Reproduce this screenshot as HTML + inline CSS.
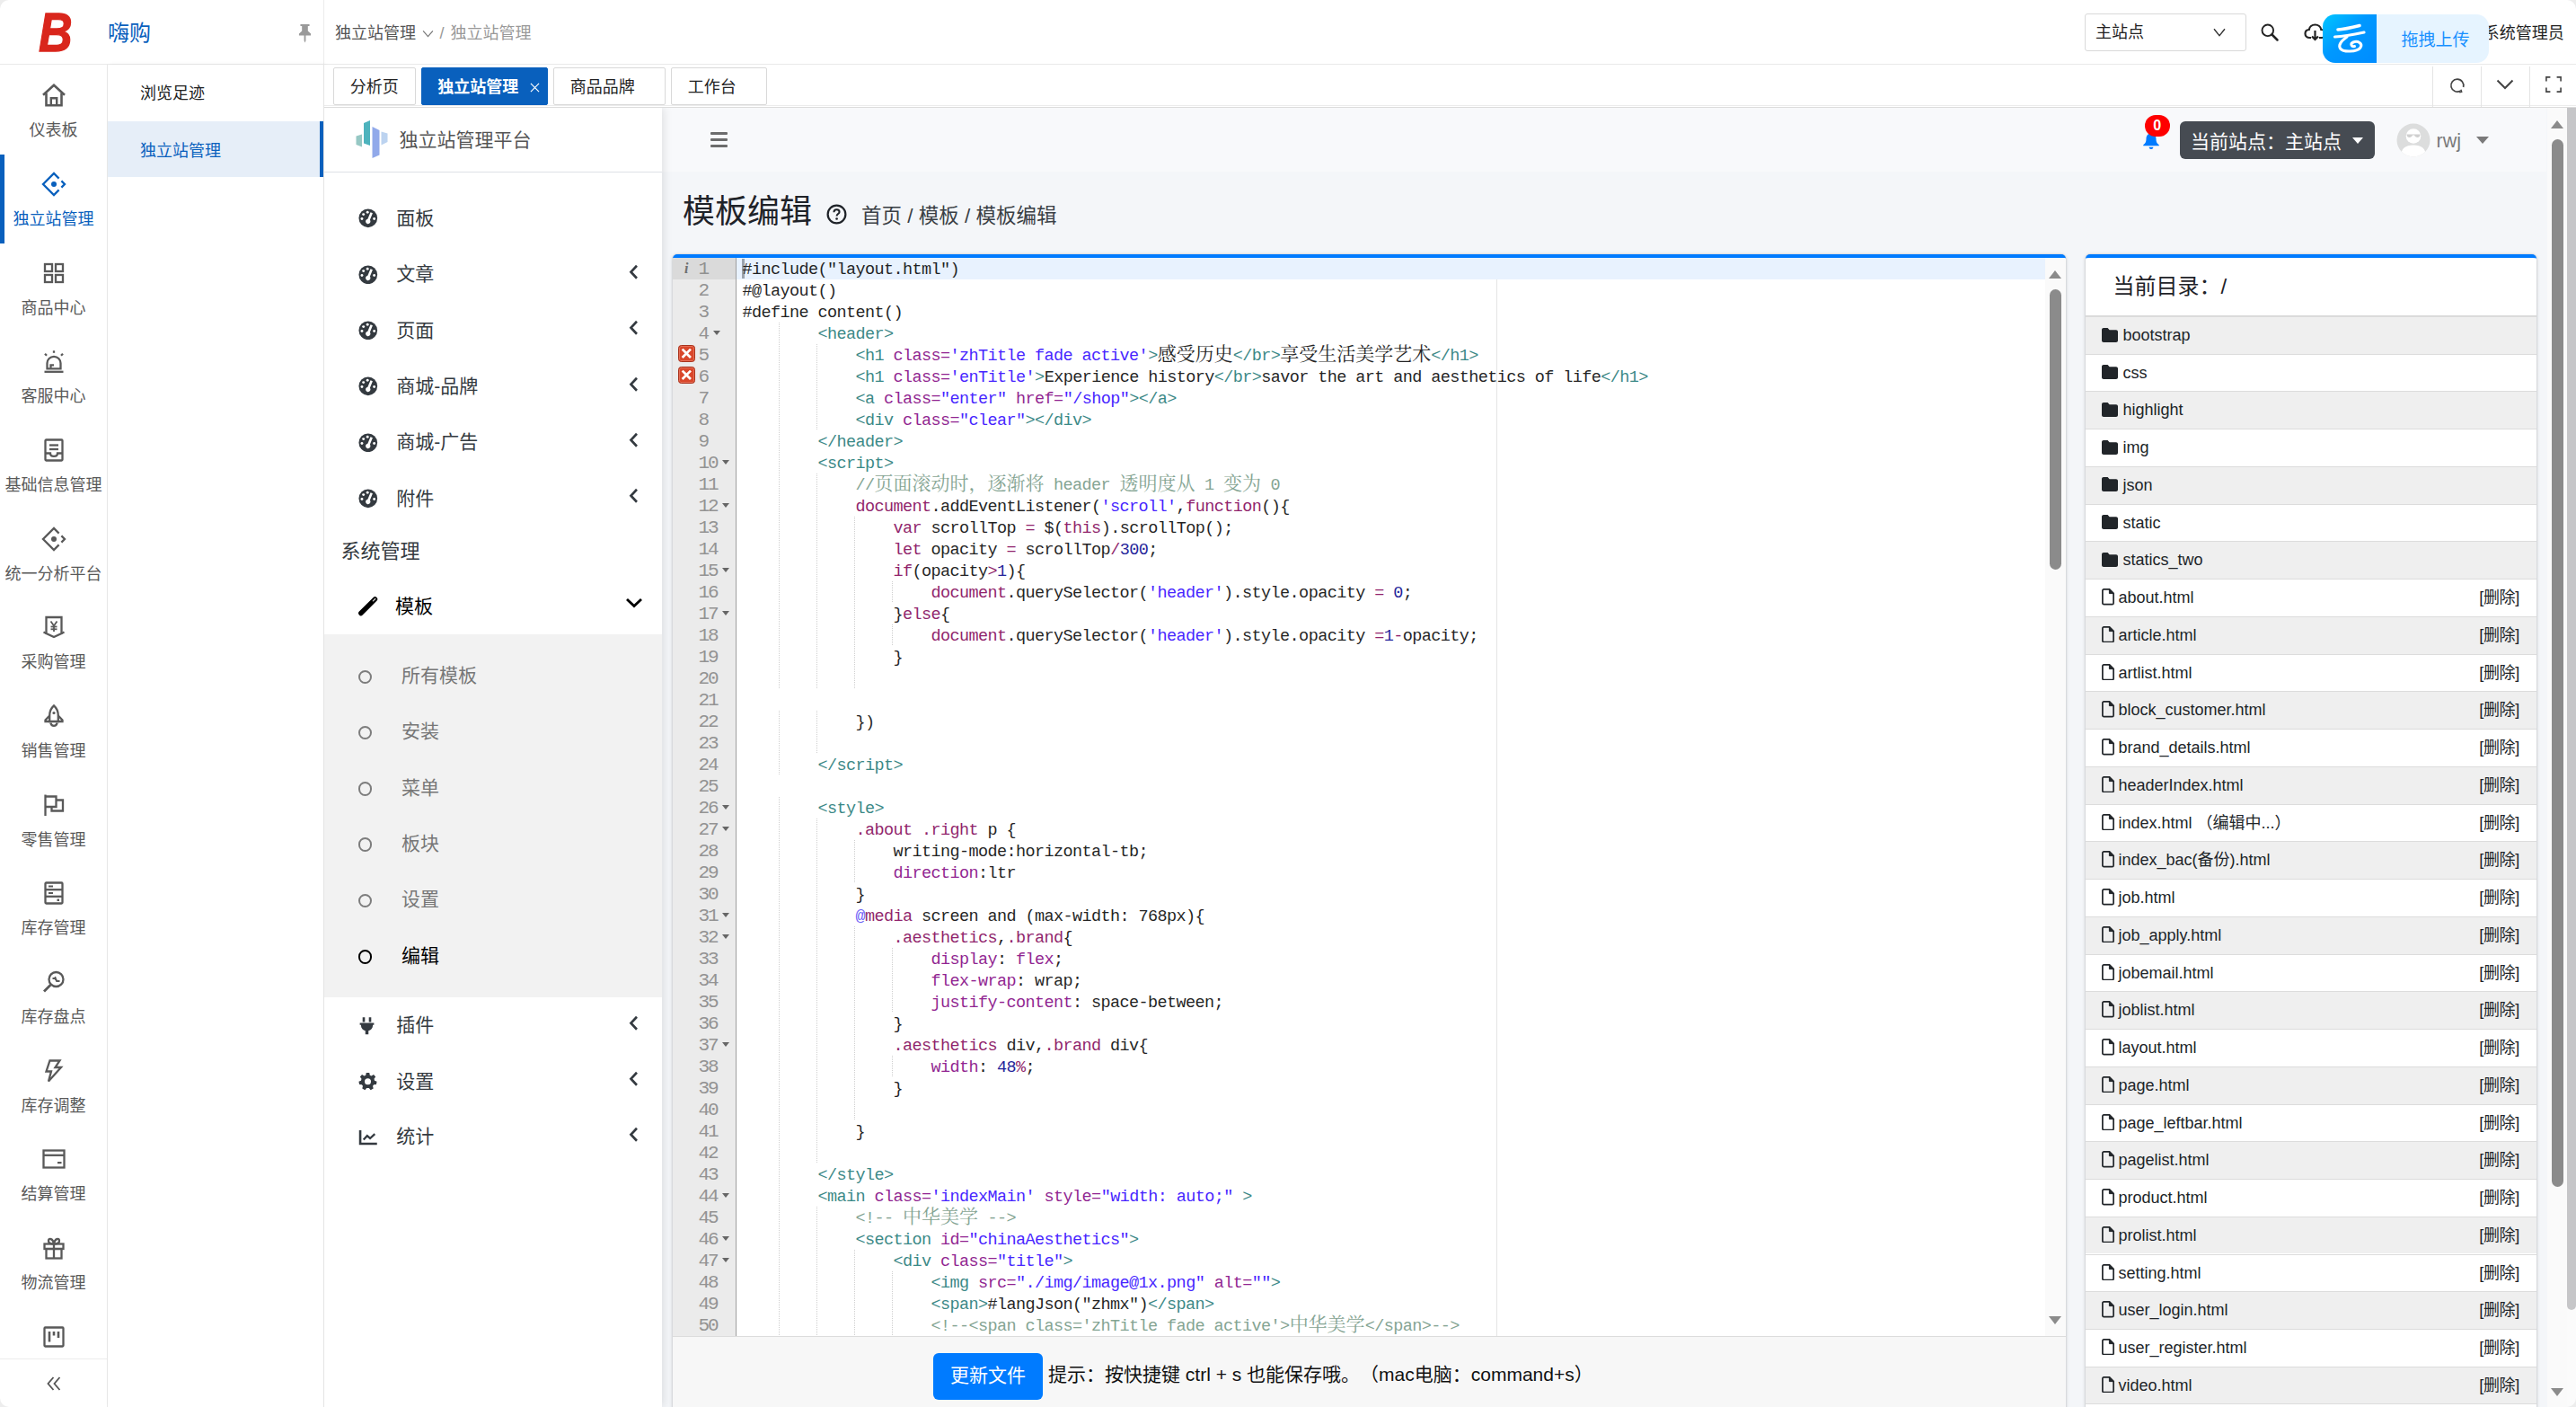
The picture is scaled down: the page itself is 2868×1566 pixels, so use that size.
<!DOCTYPE html>
<html lang="zh-CN">
<head>
<meta charset="utf-8">
<title>模板编辑 - 独立站管理</title>
<style>
*{box-sizing:border-box;margin:0;padding:0}
html,body{width:2868px;height:1566px;overflow:hidden;background:#fff}
body{position:relative;text-spacing-trim:space-all;font-family:"Liberation Sans","Noto Sans CJK SC",sans-serif;font-size:18px;color:#333;line-height:1}
.abs{position:absolute}
svg{display:block}
/* ---------- outer header ---------- */
#hdr{position:absolute;left:0;top:0;width:2868px;height:72px;background:#fff;border-bottom:1px solid #e9e9e9}
#logoBox{position:absolute;left:0;top:0;width:361px;height:71px;border-right:1px solid #ececec}
#logoB{position:absolute;left:42.500px;top:1px;font:italic bold 62px/70px "Liberation Sans",sans-serif;color:#d9261c;-webkit-text-stroke:1.300px #d9261c;transform:scaleX(.84);transform-origin:left top}
#brand{position:absolute;left:120px;top:21px;font-size:24px;line-height:32px;color:#0960bd}
#crumb{position:absolute;left:373px;top:21.2px;height:32px;line-height:32px;font-size:18px;color:#555;white-space:nowrap}
#crumb .g{color:#999}
#siteSel{position:absolute;left:2321px;top:15px;width:180px;height:42px;border:1px solid #d9d9d9;border-radius:3px;background:#fff}
#siteSel span{position:absolute;left:11px;top:0;line-height:40px;font-size:18px;color:#222}
#admin{position:absolute;left:2764.7px;top:21.2px;line-height:32px;font-size:18px;color:#222;white-space:nowrap}
#pill{position:absolute;left:2586px;top:16px;width:185px;height:54px;border-radius:14px;background:#e6f4ff;overflow:hidden}
#pill .ic{position:absolute;left:0;top:0;width:60px;height:54px;background:linear-gradient(135deg,#00c6ff 0%,#0098ff 45%,#008cff 100%)}
#pill .tx{position:absolute;left:87.5px;top:1.2px;line-height:56px;font-size:19px;color:#1890ff;white-space:nowrap}
/* ---------- rail ---------- */
#rail{position:absolute;left:0;top:72px;width:120px;height:1494px;background:#fff;border-right:1px solid #e9e9e9;overflow:hidden}
.ri{position:absolute;left:0;width:119px;height:98.65px;text-align:center;color:#595959}
.ri svg{position:absolute;left:46px;top:19px;width:28px;height:28px}
.ri span{position:absolute;left:-20px;width:159px;top:60px;line-height:24px;font-size:18px;white-space:nowrap}
.ri.on{color:#0960bd}
.ri.on:before{content:"";position:absolute;left:0;top:0;width:5px;height:98.65px;background:#0960bd}
#railFoot{position:absolute;left:0;top:1440px;width:119px;height:54px;background:#fff;border-top:1px solid #ececec}
/* ---------- secondary menu ---------- */
#sub{position:absolute;left:120px;top:72px;width:241px;height:1494px;background:#fff;border-right:1px solid #e4e4e4;box-shadow:2px 0 5px rgba(0,0,0,.05)}
#sub .it{position:absolute;left:0;width:240px;height:61.5px;line-height:61.5px;padding-left:36px;font-size:18px;color:#222}
#sub .it.on{background:#e6eef8;color:#0960bd;border-right:4px solid #0960bd;line-height:66.5px}
/* ---------- tabs ---------- */
#tabs{position:absolute;left:361px;top:72px;width:2507px;height:48px;background:#fff}
#tabs .ln1{position:absolute;left:0;top:44.5px;width:2507px;height:1px;background:#ececec}
#tabs .ln2{position:absolute;left:0;top:47px;width:2507px;height:1px;background:#dcdcdc}
.tab{position:absolute;top:3px;height:42px;border:1px solid #d9d9d9;border-radius:2px;background:#fff;font-size:18px;line-height:42.5px;color:#222;padding-left:17.7px;white-space:nowrap}
.tab.on{background:#0960bd;border-color:#0960bd;color:#fff;font-weight:bold}
.tbtn{position:absolute;top:2px;width:54px;height:45px;border-left:1px solid #e4e4e4}

/* ---------- inner frame ---------- */
#frame{position:absolute;left:361px;top:120px;width:2507px;height:1446px;background:#f4f6f9;overflow:hidden;font-size:21px;color:#212529}
#side{position:absolute;left:0;top:0;width:376px;height:1446px;background:#fff;box-shadow:2px 0 10px rgba(0,0,0,.10)}
#side .logo{position:absolute;left:0;top:0;width:376px;height:71.5px;border-bottom:1.5px solid #dee2e6}
#side .logo span{position:absolute;left:83.500px;top:16px;line-height:40px;font-size:21px;color:#555;white-space:nowrap}
.mi{position:absolute;left:0;width:376px;height:56px;color:#343a40;font-size:21px;line-height:56px}
.mi .ic{position:absolute;left:36.200px;top:15.5px;width:25px;height:25px}
.mi .tx{position:absolute;left:80.200px;top:0;white-space:nowrap}
.mi .ch{position:absolute;left:339px;top:15px;width:12px;height:20px}
.mh{position:absolute;left:18.500px;top:474px;line-height:40px;font-size:22px;color:#343a40}
#subm{position:absolute;left:0;top:586px;width:376px;height:404px;background:#f2f2f2}
.si{position:absolute;left:0;width:376px;height:56px;color:#777;font-size:21px;line-height:56px}
.si i{position:absolute;left:37.700px;top:21.500px;width:15.500px;height:15.500px;border:2px solid #7d7d7d;border-radius:50%}
.si span{position:absolute;left:86px;top:0}
.si.on{color:#000}
.si.on i{border-color:#000}
#nav{position:absolute;left:376px;top:0;width:2098px;height:71px;background:#f8f9fb}
#nav .bar{position:absolute;left:54px;width:19px;height:2.6px;background:#6c6c6c;border-radius:1px}
#site{position:absolute;left:1690px;top:15px;width:217px;height:42px;background:#464b52;border-radius:6px;color:#fff;font-size:21px;line-height:45px;padding-left:12px;white-space:nowrap}
#rwj{position:absolute;left:1975.500px;top:16.500px;line-height:40px;font-size:21.500px;color:#7a7a7a}
#ttl{position:absolute;left:399px;top:92px;line-height:48px;font-size:36px;color:#1f2329;white-space:nowrap}
#bc{position:absolute;left:598px;top:103px;line-height:36px;font-size:22.5px;color:#3a3f45;white-space:nowrap}
/* cards */
.card{position:absolute;background:#fff;border-top:4px solid #007bff;border-radius:5px;box-shadow:0 0 2px rgba(0,0,0,.16),0 1px 4px rgba(0,0,0,.18);overflow:hidden}
/* scrollbars */
.sbt{position:absolute;background:#fafafa}
.thumb{position:absolute;background:#8b8b8b;border-radius:7px}
.tri-u{position:absolute;width:0;height:0;border-left:7.5px solid transparent;border-right:7.5px solid transparent;border-bottom:9.5px solid #8b8b8b}
.tri-d{position:absolute;width:0;height:0;border-left:7.5px solid transparent;border-right:7.5px solid transparent;border-top:9.5px solid #8b8b8b}

/* ---------- editor ---------- */
#ed{left:388px;top:163px;width:1551px;height:1300px}
#gut{position:absolute;left:0;top:0;width:71px;height:1200px;background:#ebebeb;border-right:1px solid #9f9f9f}
#gut .al{position:absolute;left:0;top:0;width:70px;height:24px;background:#dadada}
.ln{position:absolute;left:28.5px;height:24px;line-height:24px;font-family:"Liberation Mono",monospace;font-size:21px;letter-spacing:-2.1px;color:#8a8a8a;white-space:pre}
.ln b{position:relative;top:1.2px;font-weight:normal;opacity:.9}
.fa{position:absolute;width:0;height:0;border-left:4.5px solid transparent;border-right:4.5px solid transparent;border-top:5.5px solid #666}
.err{position:absolute;left:6px;width:19px;height:19px;border-radius:3.5px;background:#d9472b;border:1.2px solid #a8321c;box-shadow:inset 0 0 0 1px rgba(255,180,160,.35)}
#code{position:absolute;left:71px;top:0;width:1457px;height:1200px;background:#fff;overflow:hidden}
#code .al{position:absolute;left:0;top:0;width:1457px;height:24px;background:#e8f2fe}
#code .pm{position:absolute;left:845.5px;top:24px;width:1.5px;height:1176px;background:#e4e4e4}
.cl{position:absolute;left:6.5px;height:24px;line-height:24px;font-family:"Liberation Mono","Noto Serif CJK SC",monospace;font-size:18.5px;letter-spacing:-0.6px;color:#000;white-space:pre}
.cl>b{position:relative;top:1.7px;font-weight:normal;opacity:.86}
.cl .z{font-size:21px;letter-spacing:0;line-height:20px;position:relative;top:0.5px}
.cl .t{color:#197674}.cl .a{color:#7f007f}.cl .s{color:#2a00ff}.cl .k{color:#7f0055}.cl .n{color:#00008b}.cl .c{color:#719682}.cl .y{color:#7f007f}.cl .b{color:#5848f6}
.ig{position:absolute;width:1px;height:24px;background:repeating-linear-gradient(to bottom,#cfcfcf 0,#cfcfcf 1px,transparent 1px,transparent 2px)}
#edfoot{position:absolute;left:0;top:1200px;width:1551px;height:120px;background:#f7f7f7;border-top:1px solid #dcdcdc}
#upd{position:absolute;left:290px;top:18px;width:122px;height:52px;border-radius:6px;background:#007bff;color:#fff;font-size:21px;line-height:50.500px;text-align:center}
#hint{position:absolute;left:418px;top:18px;line-height:48.500px;font-size:21px;color:#111;white-space:nowrap}

/* ---------- file list ---------- */
#fl{left:1960.5px;top:163px;width:502.5px;height:1300px}
#fl .hd{position:absolute;left:0;top:0;width:502.5px;height:65px;border-bottom:1px solid #d8d8d8}
#fl .hd span{position:absolute;left:31px;top:13px;line-height:38px;font-size:24px;color:#1f2329;white-space:nowrap}
.fr{position:absolute;left:0;width:502.5px;height:41.74px;border-top:1.5px solid #dcdcdc;font-size:18px;line-height:40px;color:#212529;white-space:nowrap}
.fr.g{background:#efefef}
.fr .fo{position:absolute;left:18px;top:11.5px;width:18px;height:16px}
.fr .fi{position:absolute;left:18px;top:10px;width:14px;height:18.5px}
.fr .nm{position:absolute;top:0}
.fr .del{position:absolute;right:19px;top:0;letter-spacing:-0.3px}
</style>
</head>
<body>
<div id="hdr">
<div id="logoBox"><div id="logoB">B</div><div id="brand">嗨购</div>
<svg viewBox="0 0 20 24" style="position:absolute;left:330px;top:26px;width:19px;height:22px"><path d="M4.5 1 H15.5 V3.2 H13.6 V9.2 L17.2 12.6 V14.6 H11 V21 L10 23.5 L9 21 V14.6 H2.8 V12.6 L6.4 9.2 V3.2 H4.5 Z" fill="#9a9a9a"/></svg>
</div>
<div id="crumb">独立站管理<svg viewBox="0 0 14 10" style="display:inline-block;width:13px;height:9px;margin:0 7px 0 6.5px;vertical-align:1px"><path d="M1 1.5 L7 8.5 L13 1.5" fill="none" stroke="#777" stroke-width="1.3"/></svg><span class="g">/<span style="display:inline-block;width:7px"></span>独立站管理</span></div>
<div id="siteSel"><span>主站点</span><svg viewBox="0 0 14 10" style="position:absolute;left:141.700px;top:14.500px;width:14px;height:10px"><path d="M1 1.2 L7 8.6 L13 1.2" fill="none" stroke="#333" stroke-width="1.4"/></svg></div>
<svg viewBox="0 0 22 22" style="position:absolute;left:2515.500px;top:25px;width:22px;height:22px"><circle cx="8.8" cy="8.8" r="6.3" fill="none" stroke="#222" stroke-width="1.9"/><path d="M13.5 13.5 L19.500 19.500" stroke="#222" stroke-width="2.500" stroke-linecap="round"/></svg>
<svg viewBox="0 0 26 20" style="position:absolute;left:2565px;top:26px;width:26px;height:20px"><path d="M8 16 H6.5 C3.5 16 1.5 14 1.5 11.5 C1.5 9 3.3 7.2 5.8 7 C6.3 3.8 9 1.5 12.5 1.5 C16 1.5 18.8 3.8 19.3 7 C22 7.2 24.5 9 24.5 11.8 C24.5 14.2 22.5 16 20 16 H17" fill="none" stroke="#222" stroke-width="2.2"/><path d="M12.5 8 V17.5 M9 14.5 L12.5 18 L16 14.5" fill="none" stroke="#222" stroke-width="2.2"/></svg>
<div id="admin">系统管理员</div>
<div id="pill"><div class="ic"><svg viewBox="0 0 60 54" style="width:60px;height:54px"><g fill="none" stroke="#fff" stroke-linecap="round"><path d="M17 17 C25 16.5 33 14.5 41 12.5" stroke-width="3.6"/><path d="M13.5 25 C23 24.5 34 22.5 46 20" stroke-width="3.2"/><path d="M27 25 C20 30 17 34 19.5 38 C23 42.5 38 42 42 37 C45 32.5 39 29 34 31 C30.5 32.5 31.5 36.5 35.5 35.5" stroke-width="3"/></g></svg></div><div class="tx">拖拽上传</div></div>
</div>
<div id="rail">
<div class="ri" style="top:1.40px"><svg viewBox="0 0 28 28" ><g fill="none" stroke="currentColor" stroke-width="2.3" stroke-linejoin="miter" stroke-linecap="butt" stroke-linejoin="round"><path d="M2 13.800 L14 2.800 L26 13.800" stroke-width="2.600"/><path d="M5.500 11.500 V25.300 H22.500 V11.500" stroke-width="2.600"/><path d="M10.800 25 V17.300 H17.200 V25" stroke-width="2.400"/></g></svg><span>仪表板</span></div>
<div class="ri on" style="top:100.05px"><svg viewBox="0 0 28 28" ><g fill="none" stroke="currentColor" stroke-width="2.3" stroke-linejoin="miter" stroke-linecap="butt" stroke-width="2.600"><path d="M19.600 7.600 L14 2 L2 14 L14 26 L19.600 20.400"/><path d="M22.400 10.400 L26 14 L22.400 17.600"/></g><circle cx="14" cy="14" r="3" fill="currentColor"/></svg><span>独立站管理</span></div>
<div class="ri" style="top:198.70px"><svg viewBox="0 0 28 28" ><g fill="none" stroke="currentColor" stroke-width="2.3" stroke-linejoin="miter" stroke-linecap="butt"><rect x="4" y="4" width="8" height="8"/><rect x="16" y="4" width="8" height="8"/><rect x="4" y="16" width="8" height="8"/><rect x="16" y="16" width="8" height="8"/></g></svg><span>商品中心</span></div>
<div class="ri" style="top:297.35px"><svg viewBox="0 0 28 28" ><g fill="none" stroke="currentColor" stroke-width="2.3" stroke-linejoin="miter" stroke-linecap="butt" transform="translate(0,0.8)"><path d="M6.5 21.5 V15.5 a7.5 7.5 0 0 1 15 0 V21.5 Z"/><path d="M3.5 25 H24.5"/><path d="M14 1.5 V4"/><path d="M4 5 L6 7"/><path d="M24 5 L22 7"/><path d="M10.5 21 V17.5 H14"/></g></svg><span>客服中心</span></div>
<div class="ri" style="top:396.00px"><svg viewBox="0 0 28 28" ><g fill="none" stroke="currentColor" stroke-width="2.3" stroke-linejoin="miter" stroke-linecap="butt"><rect x="4.5" y="2.5" width="19" height="23" rx="1"/><path d="M9 8.5 H19"/><path d="M9 13 H19"/><path d="M4.5 17.5 H10 C10 22 18 22 18 17.5 H23.5"/></g></svg><span>基础信息管理</span></div>
<div class="ri" style="top:494.65px"><svg viewBox="0 0 28 28" ><g fill="none" stroke="currentColor" stroke-width="2.3" stroke-linejoin="miter" stroke-linecap="butt" stroke-width="2.600"><path d="M19.600 7.600 L14 2 L2 14 L14 26 L19.600 20.400"/><path d="M22.400 10.400 L26 14 L22.400 17.600"/></g><circle cx="14" cy="14" r="3" fill="currentColor"/></svg><span>统一分析平台</span></div>
<div class="ri" style="top:593.30px"><svg viewBox="0 0 28 28" ><g fill="none" stroke="currentColor" stroke-width="2.3" stroke-linejoin="miter" stroke-linecap="butt"><path d="M5.5 3 H22.5 V21 L14 25 L5.5 21 Z"/><path d="M2.5 19.5 L5.5 21"/><path d="M25.5 19.5 L22.5 21"/></g><g fill="none" stroke="currentColor" stroke-width="1.8"><path d="M10.5 7.5 L14 12.5 L17.5 7.5"/><path d="M14 12.5 V19"/><path d="M10.5 13.5 H17.5"/><path d="M10.5 16.3 H17.5"/></g></svg><span>采购管理</span></div>
<div class="ri" style="top:691.95px"><svg viewBox="0 0 28 28" ><g fill="none" stroke="currentColor" stroke-width="2.3" stroke-linejoin="miter" stroke-linecap="butt" stroke-linejoin="round"><path d="M14 2.300 C17.600 5.500 18.800 9.500 18.800 13.500 V20 H9.200 V13.500 C9.200 9.500 10.400 5.500 14 2.300 Z"/><path d="M9.200 13.500 L4.500 18.500 V20 H9.200"/><path d="M18.800 13.500 L23.500 18.500 V20 H18.800"/><path d="M10.300 21.500 C11.300 26 16.700 26 17.700 21.500"/></g><circle cx="14" cy="10.500" r="1.600" fill="currentColor"/></svg><span>销售管理</span></div>
<div class="ri" style="top:790.60px"><svg viewBox="0 0 28 28" ><g fill="none" stroke="currentColor" stroke-width="2.3" stroke-linejoin="miter" stroke-linecap="butt"><path d="M4.5 2.5 V26"/><path d="M4.5 4.5 H16.5 V16 H4.5"/><path d="M16.5 8.5 H24 V20.5 H11.5 V16"/></g></svg><span>零售管理</span></div>
<div class="ri" style="top:889.25px"><svg viewBox="0 0 28 28" ><g fill="none" stroke="currentColor" stroke-width="2.3" stroke-linejoin="miter" stroke-linecap="butt"><rect x="4.5" y="2.5" width="19" height="23" rx="1"/><path d="M4.5 10.2 H23.5"/><path d="M4.5 17.8 H23.5"/></g><g fill="currentColor"><rect x="8" y="5.5" width="5" height="2"/><rect x="8" y="13" width="5" height="2"/><rect x="17.5" y="20.5" width="2.5" height="2.5"/></g></svg><span>库存管理</span></div>
<div class="ri" style="top:987.90px"><svg viewBox="0 0 28 28" ><g fill="none" stroke="currentColor" stroke-width="2.3" stroke-linejoin="miter" stroke-linecap="butt"><circle cx="16.5" cy="11" r="8"/><path d="M10.5 17 L3 24.5" stroke-width="2.8"/></g><path d="M12.5 10 H15 L17.5 13 H20.5" fill="none" stroke="currentColor" stroke-width="1.8"/><path d="M15.3 8 L17.3 13.8" fill="none" stroke="currentColor" stroke-width="1.6"/></svg><span>库存盘点</span></div>
<div class="ri" style="top:1086.55px"><svg viewBox="0 0 28 28" ><g fill="none" stroke="currentColor" stroke-width="2.3" stroke-linejoin="miter" stroke-linecap="butt" stroke-width="2" stroke-linejoin="round"><path d="M9.5 2.5 H20.5 L15.5 10 H22 L8 25.5 L11 14.5 H5.5 Z"/></g></svg><span>库存调整</span></div>
<div class="ri" style="top:1185.20px"><svg viewBox="0 0 28 28" ><g fill="none" stroke="currentColor" stroke-width="2.3" stroke-linejoin="miter" stroke-linecap="butt"><rect x="2.500" y="4.500" width="23" height="19"/><path d="M2.500 9.800 H25.500"/></g><rect x="18" y="17" width="4.500" height="2.200" fill="currentColor"/></svg><span>结算管理</span></div>
<div class="ri" style="top:1283.85px"><svg viewBox="0 0 28 28" ><g fill="none" stroke="currentColor" stroke-width="2.3" stroke-linejoin="miter" stroke-linecap="butt"><rect x="3.5" y="9.5" width="21" height="5.5"/><rect x="5.5" y="15" width="17" height="10.5"/><path d="M14 9.5 V25.5"/><path d="M14 9.5 C10 9.5 7.5 8 8 5.5 C8.5 3 13 3 14 9.5 C15 3 19.5 3 20 5.5 C20.5 8 18 9.5 14 9.5"/></g></svg><span>物流管理</span></div>
<div class="ri" style="top:1382.50px"><svg viewBox="0 0 28 28" ><g fill="none" stroke="currentColor" stroke-width="2.3" stroke-linejoin="miter" stroke-linecap="butt"><rect x="3.5" y="3.5" width="21" height="21" rx="1"/><path d="M9 8 V19.5" stroke-width="2.6"/><path d="M14 8 V12.5" stroke-width="2.6"/><path d="M19 8 V15" stroke-width="2.6"/></g></svg><span>生产管理</span></div>
<div id="railFoot"><svg viewBox="0 0 20 20" style="position:absolute;left:50px;top:17px;width:20px;height:20px"><g fill="none" stroke="#555" stroke-width="1.8"><path d="M9.5 3 L3.5 10 L9.5 17"/><path d="M16.5 3 L10.5 10 L16.5 17"/></g></svg></div>
</div>
<div id="sub"><div class="it" style="top:1.5px">浏览足迹</div><div class="it on" style="top:63px">独立站管理</div></div>
<div id="tabs"><div class="ln1"></div><div class="ln2"></div>
<div class="tab" style="left:10px;width:92px">分析页</div>
<div class="tab on" style="left:107.5px;width:141.5px">独立站管理<svg viewBox="0 0 12 12" style="position:absolute;left:120px;top:16.300px;width:11px;height:11px"><path d="M1 1 L11 11 M11 1 L1 11" stroke="#fff" stroke-width="1.3" fill="none"/></svg></div>
<div class="tab" style="left:255px;width:124.5px">商品品牌</div>
<div class="tab" style="left:386px;width:107px">工作台</div>
<div class="tbtn" style="left:2347px"><svg viewBox="0 0 20 20" style="position:absolute;left:16.500px;top:10.500px;width:20px;height:20px"><path d="M13.2 16.3 A7 7 0 1 1 16.6 12" fill="none" stroke="#444" stroke-width="1.7"/><path d="M12.2 17.8 L14.6 17.2 L13.8 14.8" fill="none" stroke="#444" stroke-width="1.6"/></svg></div>
<div class="tbtn" style="left:2401px"><svg viewBox="0 0 20 12" style="position:absolute;left:16.200px;top:13.500px;width:20px;height:12px"><path d="M1.5 1.5 L10 10 L18.5 1.5" fill="none" stroke="#444" stroke-width="2"/></svg></div>
<div class="tbtn" style="left:2455px;width:52px"><svg viewBox="0 0 20 20" style="position:absolute;left:17px;top:10.500px;width:18px;height:18px"><path d="M1 6 V1 H6 M14 1 H19 V6 M19 14 V19 H14 M6 19 H1 V14" fill="none" stroke="#444" stroke-width="1.8"/></svg></div>
</div>
<div id="frame">
<div id="nav"><div class="bar" style="top:27px"></div><div class="bar" style="top:34px"></div><div class="bar" style="top:41px"></div>
<svg viewBox="0 0 20 20" style="position:absolute;left:1648px;top:28px;width:20px;height:19px"><path d="M10 0.500 C6 0.500 4.200 3.500 4.200 7 C4.200 11 2.500 12.500 0.800 14 V15 H19.200 V14 C17.500 12.500 15.800 11 15.800 7 C15.800 3.500 14 0.500 10 0.500 Z" fill="#007bff"/><path d="M7.500 16.500 H12.500 C12.300 18.200 11.300 19 10 19 C8.700 19 7.700 18.200 7.500 16.500 Z" fill="#007bff"/></svg>
<div style="position:absolute;left:1650.700px;top:8px;width:28px;height:24px;border-radius:12px;background:#fe0000;color:#fff;font:bold 16px/24px 'Liberation Sans',sans-serif;text-align:center">0</div>
<div id="site">当前站点：主站点<svg viewBox="0 0 12 7" style="position:absolute;left:192px;top:18px;width:12px;height:7px"><path d="M0 0 H12 L6 7 Z" fill="#fff"/></svg></div>
<svg viewBox="0 0 38 38" style="position:absolute;left:1931px;top:17px;width:38px;height:38px"><defs><clipPath id="avc"><circle cx="19" cy="19" r="18.500"/></clipPath></defs><circle cx="19" cy="19" r="18.500" fill="#dcdddd"/><g clip-path="url(#avc)"><circle cx="19" cy="14.500" r="8.300" fill="#fff"/><path d="M5 38 C5 28 10 24.500 19 24.500 C28 24.500 33 28 33 38 Z" fill="#fff"/><path d="M11.500 12.500 H26.500 C26.500 15 25 16 23.500 16 C22 16 20.500 15 20 13.500 H18 C17.500 15 16 16 14.500 16 C13 16 11.500 15 11.500 12.500 Z" fill="#d0d0d0"/></g></svg>
<div id="rwj">rwj</div>
<svg viewBox="0 0 14 8" style="position:absolute;left:2020px;top:32px;width:14px;height:8px"><path d="M0 0 H14 L7 8 Z" fill="#7a7a7a"/></svg>
</div>
<div id="ttl">模板编辑</div><svg viewBox="0 0 24 24" style="position:absolute;left:559px;top:107px;width:23px;height:23px"><circle cx="12" cy="12" r="10.300" fill="none" stroke="#1f2329" stroke-width="2.300"/><path d="M8.800 9.600 C8.800 7.600 10.200 6.500 12 6.500 C13.900 6.500 15.200 7.700 15.200 9.300 C15.200 11.500 12.100 11.600 12.100 14" fill="none" stroke="#1f2329" stroke-width="2.100"/><circle cx="12.100" cy="17.200" r="1.400" fill="#1f2329"/></svg><div id="bc">首页 / 模板 / 模板编辑</div>
<div class="card" id="ed">
<div id="gut"><div class="al"></div>
<div style="position:absolute;left:13px;top:0;width:10px;height:24px;line-height:24px;font:italic bold 16px/24px 'Liberation Serif',serif;color:#6f6f6f">i</div>
<div class="ln" style="top:0px"><b>1</b></div>
<div class="ln" style="top:24px"><b>2</b></div>
<div class="ln" style="top:48px"><b>3</b></div>
<div class="ln" style="top:72px"><b>4</b></div>
<div class="fa" style="left:44.5px;top:81px"></div>
<div class="ln" style="top:96px"><b>5</b></div>
<div class="err" style="top:97.3px"><svg viewBox="0 0 16 16" style="width:16.6px;height:16.6px"><path d="M3.500 3.500 L12.500 12.500 M12.500 3.500 L3.500 12.500" stroke="#fff" stroke-width="2.600" fill="none"/></svg></div>
<div class="ln" style="top:120px"><b>6</b></div>
<div class="err" style="top:121.3px"><svg viewBox="0 0 16 16" style="width:16.6px;height:16.6px"><path d="M3.500 3.500 L12.500 12.500 M12.500 3.500 L3.500 12.500" stroke="#fff" stroke-width="2.600" fill="none"/></svg></div>
<div class="ln" style="top:144px"><b>7</b></div>
<div class="ln" style="top:168px"><b>8</b></div>
<div class="ln" style="top:192px"><b>9</b></div>
<div class="ln" style="top:216px"><b>10</b></div>
<div class="fa" style="left:55.0px;top:225px"></div>
<div class="ln" style="top:240px"><b>11</b></div>
<div class="ln" style="top:264px"><b>12</b></div>
<div class="fa" style="left:55.0px;top:273px"></div>
<div class="ln" style="top:288px"><b>13</b></div>
<div class="ln" style="top:312px"><b>14</b></div>
<div class="ln" style="top:336px"><b>15</b></div>
<div class="fa" style="left:55.0px;top:345px"></div>
<div class="ln" style="top:360px"><b>16</b></div>
<div class="ln" style="top:384px"><b>17</b></div>
<div class="fa" style="left:55.0px;top:393px"></div>
<div class="ln" style="top:408px"><b>18</b></div>
<div class="ln" style="top:432px"><b>19</b></div>
<div class="ln" style="top:456px"><b>20</b></div>
<div class="ln" style="top:480px"><b>21</b></div>
<div class="ln" style="top:504px"><b>22</b></div>
<div class="ln" style="top:528px"><b>23</b></div>
<div class="ln" style="top:552px"><b>24</b></div>
<div class="ln" style="top:576px"><b>25</b></div>
<div class="ln" style="top:600px"><b>26</b></div>
<div class="fa" style="left:55.0px;top:609px"></div>
<div class="ln" style="top:624px"><b>27</b></div>
<div class="fa" style="left:55.0px;top:633px"></div>
<div class="ln" style="top:648px"><b>28</b></div>
<div class="ln" style="top:672px"><b>29</b></div>
<div class="ln" style="top:696px"><b>30</b></div>
<div class="ln" style="top:720px"><b>31</b></div>
<div class="fa" style="left:55.0px;top:729px"></div>
<div class="ln" style="top:744px"><b>32</b></div>
<div class="fa" style="left:55.0px;top:753px"></div>
<div class="ln" style="top:768px"><b>33</b></div>
<div class="ln" style="top:792px"><b>34</b></div>
<div class="ln" style="top:816px"><b>35</b></div>
<div class="ln" style="top:840px"><b>36</b></div>
<div class="ln" style="top:864px"><b>37</b></div>
<div class="fa" style="left:55.0px;top:873px"></div>
<div class="ln" style="top:888px"><b>38</b></div>
<div class="ln" style="top:912px"><b>39</b></div>
<div class="ln" style="top:936px"><b>40</b></div>
<div class="ln" style="top:960px"><b>41</b></div>
<div class="ln" style="top:984px"><b>42</b></div>
<div class="ln" style="top:1008px"><b>43</b></div>
<div class="ln" style="top:1032px"><b>44</b></div>
<div class="fa" style="left:55.0px;top:1041px"></div>
<div class="ln" style="top:1056px"><b>45</b></div>
<div class="ln" style="top:1080px"><b>46</b></div>
<div class="fa" style="left:55.0px;top:1089px"></div>
<div class="ln" style="top:1104px"><b>47</b></div>
<div class="fa" style="left:55.0px;top:1113px"></div>
<div class="ln" style="top:1128px"><b>48</b></div>
<div class="ln" style="top:1152px"><b>49</b></div>
<div class="ln" style="top:1176px"><b>50</b></div>
</div>
<div id="code"><div class="al"></div><div class="pm"></div>
<div style="position:absolute;left:6px;top:1px;width:2.5px;height:22px;background:#9aa3ad"></div>
<div class="cl" style="top:0px"><b>#include("layout.html")</b></div>
<div class="cl" style="top:24px"><b>#@layout()</b></div>
<div class="cl" style="top:48px"><b>#define content()</b></div>
<div class="ig" style="left:46.5px;top:72px"></div>
<div class="cl" style="top:72px"><b>        <span class="t">&lt;header&gt;</span></b></div>
<div class="ig" style="left:46.5px;top:96px"></div>
<div class="ig" style="left:88.5px;top:96px"></div>
<div class="cl" style="top:96px"><b>            <span class="t">&lt;h1</span> <span class="a">class=</span><span class="s">'zhTitle fade active'</span><span class="t">&gt;</span><span class="z">感受历史</span><span class="t">&lt;/br&gt;</span><span class="z">享受生活美学艺术</span><span class="t">&lt;/h1&gt;</span></b></div>
<div class="ig" style="left:46.5px;top:120px"></div>
<div class="ig" style="left:88.5px;top:120px"></div>
<div class="cl" style="top:120px"><b>            <span class="t">&lt;h1</span> <span class="a">class=</span><span class="s">'enTitle'</span><span class="t">&gt;</span>Experience history<span class="t">&lt;/br&gt;</span>savor the art and aesthetics of life<span class="t">&lt;/h1&gt;</span></b></div>
<div class="ig" style="left:46.5px;top:144px"></div>
<div class="ig" style="left:88.5px;top:144px"></div>
<div class="cl" style="top:144px"><b>            <span class="t">&lt;a</span> <span class="a">class=</span><span class="s">"enter"</span> <span class="a">href=</span><span class="s">"/shop"</span><span class="t">&gt;&lt;/a&gt;</span></b></div>
<div class="ig" style="left:46.5px;top:168px"></div>
<div class="ig" style="left:88.5px;top:168px"></div>
<div class="cl" style="top:168px"><b>            <span class="t">&lt;div</span> <span class="a">class=</span><span class="s">"clear"</span><span class="t">&gt;&lt;/div&gt;</span></b></div>
<div class="ig" style="left:46.5px;top:192px"></div>
<div class="cl" style="top:192px"><b>        <span class="t">&lt;/header&gt;</span></b></div>
<div class="ig" style="left:46.5px;top:216px"></div>
<div class="cl" style="top:216px"><b>        <span class="t">&lt;script&gt;</span></b></div>
<div class="ig" style="left:46.5px;top:240px"></div>
<div class="ig" style="left:88.5px;top:240px"></div>
<div class="cl" style="top:240px"><b>            <span class="c">//<span class="z">页面滚动时，逐渐将</span> header <span class="z">透明度从</span> 1 <span class="z">变为</span> 0</span></b></div>
<div class="ig" style="left:46.5px;top:264px"></div>
<div class="ig" style="left:88.5px;top:264px"></div>
<div class="cl" style="top:264px"><b>            <span class="k">document</span>.addEventListener(<span class="s">'scroll'</span>,<span class="k">function</span>(){</b></div>
<div class="ig" style="left:46.5px;top:288px"></div>
<div class="ig" style="left:88.5px;top:288px"></div>
<div class="ig" style="left:130.5px;top:288px"></div>
<div class="cl" style="top:288px"><b>                <span class="k">var</span> scrollTop <span class="k">=</span> $(<span class="k">this</span>).scrollTop();</b></div>
<div class="ig" style="left:46.5px;top:312px"></div>
<div class="ig" style="left:88.5px;top:312px"></div>
<div class="ig" style="left:130.5px;top:312px"></div>
<div class="cl" style="top:312px"><b>                <span class="k">let</span> opacity <span class="k">=</span> scrollTop<span class="k">/</span><span class="n">300</span>;</b></div>
<div class="ig" style="left:46.5px;top:336px"></div>
<div class="ig" style="left:88.5px;top:336px"></div>
<div class="ig" style="left:130.5px;top:336px"></div>
<div class="cl" style="top:336px"><b>                <span class="k">if</span>(opacity<span class="k">&gt;</span><span class="n">1</span>){</b></div>
<div class="ig" style="left:46.5px;top:360px"></div>
<div class="ig" style="left:88.5px;top:360px"></div>
<div class="ig" style="left:130.5px;top:360px"></div>
<div class="ig" style="left:172.5px;top:360px"></div>
<div class="cl" style="top:360px"><b>                    <span class="k">document</span>.querySelector(<span class="s">'header'</span>).style.opacity <span class="k">=</span> <span class="n">0</span>;</b></div>
<div class="ig" style="left:46.5px;top:384px"></div>
<div class="ig" style="left:88.5px;top:384px"></div>
<div class="ig" style="left:130.5px;top:384px"></div>
<div class="cl" style="top:384px"><b>                }<span class="k">else</span>{</b></div>
<div class="ig" style="left:46.5px;top:408px"></div>
<div class="ig" style="left:88.5px;top:408px"></div>
<div class="ig" style="left:130.5px;top:408px"></div>
<div class="ig" style="left:172.5px;top:408px"></div>
<div class="cl" style="top:408px"><b>                    <span class="k">document</span>.querySelector(<span class="s">'header'</span>).style.opacity <span class="k">=</span><span class="n">1</span><span class="k">-</span>opacity;</b></div>
<div class="ig" style="left:46.5px;top:432px"></div>
<div class="ig" style="left:88.5px;top:432px"></div>
<div class="ig" style="left:130.5px;top:432px"></div>
<div class="cl" style="top:432px"><b>                }</b></div>
<div class="ig" style="left:46.5px;top:456px"></div>
<div class="ig" style="left:88.5px;top:456px"></div>
<div class="ig" style="left:130.5px;top:456px"></div>
<div class="ig" style="left:46.5px;top:504px"></div>
<div class="ig" style="left:88.5px;top:504px"></div>
<div class="cl" style="top:504px"><b>            })</b></div>
<div class="ig" style="left:46.5px;top:528px"></div>
<div class="ig" style="left:88.5px;top:528px"></div>
<div class="ig" style="left:46.5px;top:552px"></div>
<div class="cl" style="top:552px"><b>        <span class="t">&lt;/script&gt;</span></b></div>
<div class="ig" style="left:46.5px;top:600px"></div>
<div class="cl" style="top:600px"><b>        <span class="t">&lt;style&gt;</span></b></div>
<div class="ig" style="left:46.5px;top:624px"></div>
<div class="ig" style="left:88.5px;top:624px"></div>
<div class="cl" style="top:624px"><b>            <span class="k">.about</span> <span class="k">.right</span> p {</b></div>
<div class="ig" style="left:46.5px;top:648px"></div>
<div class="ig" style="left:88.5px;top:648px"></div>
<div class="ig" style="left:130.5px;top:648px"></div>
<div class="cl" style="top:648px"><b>                writing-mode:horizontal-tb;</b></div>
<div class="ig" style="left:46.5px;top:672px"></div>
<div class="ig" style="left:88.5px;top:672px"></div>
<div class="ig" style="left:130.5px;top:672px"></div>
<div class="cl" style="top:672px"><b>                <span class="y">direction</span>:ltr</b></div>
<div class="ig" style="left:46.5px;top:696px"></div>
<div class="ig" style="left:88.5px;top:696px"></div>
<div class="cl" style="top:696px"><b>            }</b></div>
<div class="ig" style="left:46.5px;top:720px"></div>
<div class="ig" style="left:88.5px;top:720px"></div>
<div class="cl" style="top:720px"><b>            <span class="b">@</span><span class="k">media</span> screen and (max-width: 768px){</b></div>
<div class="ig" style="left:46.5px;top:744px"></div>
<div class="ig" style="left:88.5px;top:744px"></div>
<div class="ig" style="left:130.5px;top:744px"></div>
<div class="cl" style="top:744px"><b>                <span class="k">.aesthetics</span>,<span class="k">.brand</span>{</b></div>
<div class="ig" style="left:46.5px;top:768px"></div>
<div class="ig" style="left:88.5px;top:768px"></div>
<div class="ig" style="left:130.5px;top:768px"></div>
<div class="ig" style="left:172.5px;top:768px"></div>
<div class="cl" style="top:768px"><b>                    <span class="y">display</span>: <span class="y">flex</span>;</b></div>
<div class="ig" style="left:46.5px;top:792px"></div>
<div class="ig" style="left:88.5px;top:792px"></div>
<div class="ig" style="left:130.5px;top:792px"></div>
<div class="ig" style="left:172.5px;top:792px"></div>
<div class="cl" style="top:792px"><b>                    <span class="y">flex-wrap</span>: wrap;</b></div>
<div class="ig" style="left:46.5px;top:816px"></div>
<div class="ig" style="left:88.5px;top:816px"></div>
<div class="ig" style="left:130.5px;top:816px"></div>
<div class="ig" style="left:172.5px;top:816px"></div>
<div class="cl" style="top:816px"><b>                    <span class="y">justify-content</span>: space-between;</b></div>
<div class="ig" style="left:46.5px;top:840px"></div>
<div class="ig" style="left:88.5px;top:840px"></div>
<div class="ig" style="left:130.5px;top:840px"></div>
<div class="cl" style="top:840px"><b>                }</b></div>
<div class="ig" style="left:46.5px;top:864px"></div>
<div class="ig" style="left:88.5px;top:864px"></div>
<div class="ig" style="left:130.5px;top:864px"></div>
<div class="cl" style="top:864px"><b>                <span class="k">.aesthetics</span> div,<span class="k">.brand</span> div{</b></div>
<div class="ig" style="left:46.5px;top:888px"></div>
<div class="ig" style="left:88.5px;top:888px"></div>
<div class="ig" style="left:130.5px;top:888px"></div>
<div class="ig" style="left:172.5px;top:888px"></div>
<div class="cl" style="top:888px"><b>                    <span class="y">width</span>: <span class="n">48</span><span class="k">%</span>;</b></div>
<div class="ig" style="left:46.5px;top:912px"></div>
<div class="ig" style="left:88.5px;top:912px"></div>
<div class="ig" style="left:130.5px;top:912px"></div>
<div class="cl" style="top:912px"><b>                }</b></div>
<div class="ig" style="left:46.5px;top:936px"></div>
<div class="ig" style="left:88.5px;top:936px"></div>
<div class="ig" style="left:130.5px;top:936px"></div>
<div class="ig" style="left:46.5px;top:960px"></div>
<div class="ig" style="left:88.5px;top:960px"></div>
<div class="cl" style="top:960px"><b>            }</b></div>
<div class="ig" style="left:46.5px;top:984px"></div>
<div class="ig" style="left:88.5px;top:984px"></div>
<div class="ig" style="left:46.5px;top:1008px"></div>
<div class="cl" style="top:1008px"><b>        <span class="t">&lt;/style&gt;</span></b></div>
<div class="ig" style="left:46.5px;top:1032px"></div>
<div class="cl" style="top:1032px"><b>        <span class="t">&lt;main</span> <span class="a">class=</span><span class="s">'indexMain'</span> <span class="a">style=</span><span class="s">"width: auto;"</span> <span class="t">&gt;</span></b></div>
<div class="ig" style="left:46.5px;top:1056px"></div>
<div class="ig" style="left:88.5px;top:1056px"></div>
<div class="cl" style="top:1056px"><b>            <span class="c">&lt;!-- <span class="z">中华美学</span> --&gt;</span></b></div>
<div class="ig" style="left:46.5px;top:1080px"></div>
<div class="ig" style="left:88.5px;top:1080px"></div>
<div class="cl" style="top:1080px"><b>            <span class="t">&lt;section</span> <span class="a">id=</span><span class="s">"chinaAesthetics"</span><span class="t">&gt;</span></b></div>
<div class="ig" style="left:46.5px;top:1104px"></div>
<div class="ig" style="left:88.5px;top:1104px"></div>
<div class="ig" style="left:130.5px;top:1104px"></div>
<div class="cl" style="top:1104px"><b>                <span class="t">&lt;div</span> <span class="a">class=</span><span class="s">"title"</span><span class="t">&gt;</span></b></div>
<div class="ig" style="left:46.5px;top:1128px"></div>
<div class="ig" style="left:88.5px;top:1128px"></div>
<div class="ig" style="left:130.5px;top:1128px"></div>
<div class="ig" style="left:172.5px;top:1128px"></div>
<div class="cl" style="top:1128px"><b>                    <span class="t">&lt;img</span> <span class="a">src=</span><span class="s">"./img/image@1x.png"</span> <span class="a">alt=</span><span class="s">""</span><span class="t">&gt;</span></b></div>
<div class="ig" style="left:46.5px;top:1152px"></div>
<div class="ig" style="left:88.5px;top:1152px"></div>
<div class="ig" style="left:130.5px;top:1152px"></div>
<div class="ig" style="left:172.5px;top:1152px"></div>
<div class="cl" style="top:1152px"><b>                    <span class="t">&lt;span&gt;</span>#langJson("zhmx")<span class="t">&lt;/span&gt;</span></b></div>
<div class="ig" style="left:46.5px;top:1176px"></div>
<div class="ig" style="left:88.5px;top:1176px"></div>
<div class="ig" style="left:130.5px;top:1176px"></div>
<div class="ig" style="left:172.5px;top:1176px"></div>
<div class="cl" style="top:1176px"><b>                    <span class="c">&lt;!--&lt;span class='zhTitle fade active'&gt;<span class="z">中华美学</span>&lt;/span&gt;--&gt;</span></b></div>
</div>
<div class="sbt" style="left:1528px;top:0;width:23px;height:1200px"></div>
<div class="tri-u" style="left:1532px;top:14px"></div>
<div class="thumb" style="left:1533px;top:35px;width:13px;height:312px"></div>
<div class="tri-d" style="left:1532px;top:1178px"></div>
<div id="edfoot"><div id="upd">更新文件</div><div id="hint">提示：按快捷键 ctrl + s 也能保存哦。（mac电脑：command+s）</div></div>
</div>
<div class="card" id="fl"><div class="hd"><span>当前目录：/</span></div>
<div class="fr g" style="top:65.00px"><svg class="fo" viewBox="0 0 18 16"><path d="M0 2 C0 0.900 0.900 0 2 0 H6.600 L8.600 2.200 H16 C17.100 2.200 18 3.100 18 4.200 V14 C18 15.100 17.100 16 16 16 H2 C0.900 16 0 15.100 0 14 Z" fill="#212529"/></svg><span class="nm" style="left:42px">bootstrap</span></div>
<div class="fr" style="top:106.74px"><svg class="fo" viewBox="0 0 18 16"><path d="M0 2 C0 0.900 0.900 0 2 0 H6.600 L8.600 2.200 H16 C17.100 2.200 18 3.100 18 4.200 V14 C18 15.100 17.100 16 16 16 H2 C0.900 16 0 15.100 0 14 Z" fill="#212529"/></svg><span class="nm" style="left:42px">css</span></div>
<div class="fr g" style="top:148.48px"><svg class="fo" viewBox="0 0 18 16"><path d="M0 2 C0 0.900 0.900 0 2 0 H6.600 L8.600 2.200 H16 C17.100 2.200 18 3.100 18 4.200 V14 C18 15.100 17.100 16 16 16 H2 C0.900 16 0 15.100 0 14 Z" fill="#212529"/></svg><span class="nm" style="left:42px">highlight</span></div>
<div class="fr" style="top:190.22px"><svg class="fo" viewBox="0 0 18 16"><path d="M0 2 C0 0.900 0.900 0 2 0 H6.600 L8.600 2.200 H16 C17.100 2.200 18 3.100 18 4.200 V14 C18 15.100 17.100 16 16 16 H2 C0.900 16 0 15.100 0 14 Z" fill="#212529"/></svg><span class="nm" style="left:42px">img</span></div>
<div class="fr g" style="top:231.96px"><svg class="fo" viewBox="0 0 18 16"><path d="M0 2 C0 0.900 0.900 0 2 0 H6.600 L8.600 2.200 H16 C17.100 2.200 18 3.100 18 4.200 V14 C18 15.100 17.100 16 16 16 H2 C0.900 16 0 15.100 0 14 Z" fill="#212529"/></svg><span class="nm" style="left:42px">json</span></div>
<div class="fr" style="top:273.70px"><svg class="fo" viewBox="0 0 18 16"><path d="M0 2 C0 0.900 0.900 0 2 0 H6.600 L8.600 2.200 H16 C17.100 2.200 18 3.100 18 4.200 V14 C18 15.100 17.100 16 16 16 H2 C0.900 16 0 15.100 0 14 Z" fill="#212529"/></svg><span class="nm" style="left:42px">static</span></div>
<div class="fr g" style="top:315.44px"><svg class="fo" viewBox="0 0 18 16"><path d="M0 2 C0 0.900 0.900 0 2 0 H6.600 L8.600 2.200 H16 C17.100 2.200 18 3.100 18 4.200 V14 C18 15.100 17.100 16 16 16 H2 C0.900 16 0 15.100 0 14 Z" fill="#212529"/></svg><span class="nm" style="left:42px">statics_two</span></div>
<div class="fr" style="top:357.18px"><svg class="fi" viewBox="0 0 14 18.500"><path d="M2.300 0.900 H8.600 L13.100 5.400 V16.200 C13.100 17 12.500 17.600 11.700 17.600 H2.300 C1.500 17.600 0.900 17 0.900 16.200 V2.300 C0.900 1.500 1.500 0.900 2.300 0.900 Z" fill="none" stroke="#212529" stroke-width="1.700"/><path d="M8.400 1 V5.600 H13" fill="#212529" stroke="#212529" stroke-width="1"/></svg><span class="nm" style="left:37px">about.html</span><span class="del">[删除]</span></div>
<div class="fr g" style="top:398.92px"><svg class="fi" viewBox="0 0 14 18.500"><path d="M2.300 0.900 H8.600 L13.100 5.400 V16.200 C13.100 17 12.500 17.600 11.700 17.600 H2.300 C1.500 17.600 0.900 17 0.900 16.200 V2.300 C0.900 1.500 1.500 0.900 2.300 0.900 Z" fill="none" stroke="#212529" stroke-width="1.700"/><path d="M8.400 1 V5.600 H13" fill="#212529" stroke="#212529" stroke-width="1"/></svg><span class="nm" style="left:37px">article.html</span><span class="del">[删除]</span></div>
<div class="fr" style="top:440.66px"><svg class="fi" viewBox="0 0 14 18.500"><path d="M2.300 0.900 H8.600 L13.100 5.400 V16.200 C13.100 17 12.500 17.600 11.700 17.600 H2.300 C1.500 17.600 0.900 17 0.900 16.200 V2.300 C0.900 1.500 1.500 0.900 2.300 0.900 Z" fill="none" stroke="#212529" stroke-width="1.700"/><path d="M8.400 1 V5.600 H13" fill="#212529" stroke="#212529" stroke-width="1"/></svg><span class="nm" style="left:37px">artlist.html</span><span class="del">[删除]</span></div>
<div class="fr g" style="top:482.40px"><svg class="fi" viewBox="0 0 14 18.500"><path d="M2.300 0.900 H8.600 L13.100 5.400 V16.200 C13.100 17 12.500 17.600 11.700 17.600 H2.300 C1.500 17.600 0.900 17 0.900 16.200 V2.300 C0.900 1.500 1.500 0.900 2.300 0.900 Z" fill="none" stroke="#212529" stroke-width="1.700"/><path d="M8.400 1 V5.600 H13" fill="#212529" stroke="#212529" stroke-width="1"/></svg><span class="nm" style="left:37px">block_customer.html</span><span class="del">[删除]</span></div>
<div class="fr" style="top:524.14px"><svg class="fi" viewBox="0 0 14 18.500"><path d="M2.300 0.900 H8.600 L13.100 5.400 V16.200 C13.100 17 12.500 17.600 11.700 17.600 H2.300 C1.500 17.600 0.900 17 0.900 16.200 V2.300 C0.900 1.500 1.500 0.900 2.300 0.900 Z" fill="none" stroke="#212529" stroke-width="1.700"/><path d="M8.400 1 V5.600 H13" fill="#212529" stroke="#212529" stroke-width="1"/></svg><span class="nm" style="left:37px">brand_details.html</span><span class="del">[删除]</span></div>
<div class="fr g" style="top:565.88px"><svg class="fi" viewBox="0 0 14 18.500"><path d="M2.300 0.900 H8.600 L13.100 5.400 V16.200 C13.100 17 12.500 17.600 11.700 17.600 H2.300 C1.500 17.600 0.900 17 0.900 16.200 V2.300 C0.900 1.500 1.500 0.900 2.300 0.900 Z" fill="none" stroke="#212529" stroke-width="1.700"/><path d="M8.400 1 V5.600 H13" fill="#212529" stroke="#212529" stroke-width="1"/></svg><span class="nm" style="left:37px">headerIndex.html</span><span class="del">[删除]</span></div>
<div class="fr" style="top:607.62px"><svg class="fi" viewBox="0 0 14 18.500"><path d="M2.300 0.900 H8.600 L13.100 5.400 V16.200 C13.100 17 12.500 17.600 11.700 17.600 H2.300 C1.500 17.600 0.900 17 0.900 16.200 V2.300 C0.900 1.500 1.500 0.900 2.300 0.900 Z" fill="none" stroke="#212529" stroke-width="1.700"/><path d="M8.400 1 V5.600 H13" fill="#212529" stroke="#212529" stroke-width="1"/></svg><span class="nm" style="left:37px">index.html （编辑中...）</span><span class="del">[删除]</span></div>
<div class="fr g" style="top:649.36px"><svg class="fi" viewBox="0 0 14 18.500"><path d="M2.300 0.900 H8.600 L13.100 5.400 V16.200 C13.100 17 12.500 17.600 11.700 17.600 H2.300 C1.500 17.600 0.900 17 0.900 16.200 V2.300 C0.900 1.500 1.500 0.900 2.300 0.900 Z" fill="none" stroke="#212529" stroke-width="1.700"/><path d="M8.400 1 V5.600 H13" fill="#212529" stroke="#212529" stroke-width="1"/></svg><span class="nm" style="left:37px">index_bac(备份).html</span><span class="del">[删除]</span></div>
<div class="fr" style="top:691.10px"><svg class="fi" viewBox="0 0 14 18.500"><path d="M2.300 0.900 H8.600 L13.100 5.400 V16.200 C13.100 17 12.500 17.600 11.700 17.600 H2.300 C1.500 17.600 0.900 17 0.900 16.200 V2.300 C0.900 1.500 1.500 0.900 2.300 0.900 Z" fill="none" stroke="#212529" stroke-width="1.700"/><path d="M8.400 1 V5.600 H13" fill="#212529" stroke="#212529" stroke-width="1"/></svg><span class="nm" style="left:37px">job.html</span><span class="del">[删除]</span></div>
<div class="fr g" style="top:732.84px"><svg class="fi" viewBox="0 0 14 18.500"><path d="M2.300 0.900 H8.600 L13.100 5.400 V16.200 C13.100 17 12.500 17.600 11.700 17.600 H2.300 C1.500 17.600 0.900 17 0.900 16.200 V2.300 C0.900 1.500 1.500 0.900 2.300 0.900 Z" fill="none" stroke="#212529" stroke-width="1.700"/><path d="M8.400 1 V5.600 H13" fill="#212529" stroke="#212529" stroke-width="1"/></svg><span class="nm" style="left:37px">job_apply.html</span><span class="del">[删除]</span></div>
<div class="fr" style="top:774.58px"><svg class="fi" viewBox="0 0 14 18.500"><path d="M2.300 0.900 H8.600 L13.100 5.400 V16.200 C13.100 17 12.500 17.600 11.700 17.600 H2.300 C1.500 17.600 0.900 17 0.900 16.200 V2.300 C0.900 1.500 1.500 0.900 2.300 0.900 Z" fill="none" stroke="#212529" stroke-width="1.700"/><path d="M8.400 1 V5.600 H13" fill="#212529" stroke="#212529" stroke-width="1"/></svg><span class="nm" style="left:37px">jobemail.html</span><span class="del">[删除]</span></div>
<div class="fr g" style="top:816.32px"><svg class="fi" viewBox="0 0 14 18.500"><path d="M2.300 0.900 H8.600 L13.100 5.400 V16.200 C13.100 17 12.500 17.600 11.700 17.600 H2.300 C1.500 17.600 0.900 17 0.900 16.200 V2.300 C0.900 1.500 1.500 0.900 2.300 0.900 Z" fill="none" stroke="#212529" stroke-width="1.700"/><path d="M8.400 1 V5.600 H13" fill="#212529" stroke="#212529" stroke-width="1"/></svg><span class="nm" style="left:37px">joblist.html</span><span class="del">[删除]</span></div>
<div class="fr" style="top:858.06px"><svg class="fi" viewBox="0 0 14 18.500"><path d="M2.300 0.900 H8.600 L13.100 5.400 V16.200 C13.100 17 12.500 17.600 11.700 17.600 H2.300 C1.500 17.600 0.900 17 0.900 16.200 V2.300 C0.900 1.500 1.500 0.900 2.300 0.900 Z" fill="none" stroke="#212529" stroke-width="1.700"/><path d="M8.400 1 V5.600 H13" fill="#212529" stroke="#212529" stroke-width="1"/></svg><span class="nm" style="left:37px">layout.html</span><span class="del">[删除]</span></div>
<div class="fr g" style="top:899.80px"><svg class="fi" viewBox="0 0 14 18.500"><path d="M2.300 0.900 H8.600 L13.100 5.400 V16.200 C13.100 17 12.500 17.600 11.700 17.600 H2.300 C1.500 17.600 0.900 17 0.900 16.200 V2.300 C0.900 1.500 1.500 0.900 2.300 0.900 Z" fill="none" stroke="#212529" stroke-width="1.700"/><path d="M8.400 1 V5.600 H13" fill="#212529" stroke="#212529" stroke-width="1"/></svg><span class="nm" style="left:37px">page.html</span><span class="del">[删除]</span></div>
<div class="fr" style="top:941.54px"><svg class="fi" viewBox="0 0 14 18.500"><path d="M2.300 0.900 H8.600 L13.100 5.400 V16.200 C13.100 17 12.500 17.600 11.700 17.600 H2.300 C1.500 17.600 0.900 17 0.900 16.200 V2.300 C0.900 1.500 1.500 0.900 2.300 0.900 Z" fill="none" stroke="#212529" stroke-width="1.700"/><path d="M8.400 1 V5.600 H13" fill="#212529" stroke="#212529" stroke-width="1"/></svg><span class="nm" style="left:37px">page_leftbar.html</span><span class="del">[删除]</span></div>
<div class="fr g" style="top:983.28px"><svg class="fi" viewBox="0 0 14 18.500"><path d="M2.300 0.900 H8.600 L13.100 5.400 V16.200 C13.100 17 12.500 17.600 11.700 17.600 H2.300 C1.500 17.600 0.900 17 0.900 16.200 V2.300 C0.900 1.500 1.500 0.900 2.300 0.900 Z" fill="none" stroke="#212529" stroke-width="1.700"/><path d="M8.400 1 V5.600 H13" fill="#212529" stroke="#212529" stroke-width="1"/></svg><span class="nm" style="left:37px">pagelist.html</span><span class="del">[删除]</span></div>
<div class="fr" style="top:1025.02px"><svg class="fi" viewBox="0 0 14 18.500"><path d="M2.300 0.900 H8.600 L13.100 5.400 V16.200 C13.100 17 12.500 17.600 11.700 17.600 H2.300 C1.500 17.600 0.900 17 0.900 16.200 V2.300 C0.900 1.500 1.500 0.900 2.300 0.900 Z" fill="none" stroke="#212529" stroke-width="1.700"/><path d="M8.400 1 V5.600 H13" fill="#212529" stroke="#212529" stroke-width="1"/></svg><span class="nm" style="left:37px">product.html</span><span class="del">[删除]</span></div>
<div class="fr g" style="top:1066.76px"><svg class="fi" viewBox="0 0 14 18.500"><path d="M2.300 0.900 H8.600 L13.100 5.400 V16.200 C13.100 17 12.500 17.600 11.700 17.600 H2.300 C1.500 17.600 0.900 17 0.900 16.200 V2.300 C0.900 1.500 1.500 0.900 2.300 0.900 Z" fill="none" stroke="#212529" stroke-width="1.700"/><path d="M8.400 1 V5.600 H13" fill="#212529" stroke="#212529" stroke-width="1"/></svg><span class="nm" style="left:37px">prolist.html</span><span class="del">[删除]</span></div>
<div class="fr" style="top:1108.50px"><svg class="fi" viewBox="0 0 14 18.500"><path d="M2.300 0.900 H8.600 L13.100 5.400 V16.200 C13.100 17 12.500 17.600 11.700 17.600 H2.300 C1.500 17.600 0.900 17 0.900 16.200 V2.300 C0.900 1.500 1.500 0.900 2.300 0.900 Z" fill="none" stroke="#212529" stroke-width="1.700"/><path d="M8.400 1 V5.600 H13" fill="#212529" stroke="#212529" stroke-width="1"/></svg><span class="nm" style="left:37px">setting.html</span><span class="del">[删除]</span></div>
<div class="fr g" style="top:1150.24px"><svg class="fi" viewBox="0 0 14 18.500"><path d="M2.300 0.900 H8.600 L13.100 5.400 V16.200 C13.100 17 12.500 17.600 11.700 17.600 H2.300 C1.500 17.600 0.900 17 0.900 16.200 V2.300 C0.900 1.500 1.500 0.900 2.300 0.900 Z" fill="none" stroke="#212529" stroke-width="1.700"/><path d="M8.400 1 V5.600 H13" fill="#212529" stroke="#212529" stroke-width="1"/></svg><span class="nm" style="left:37px">user_login.html</span><span class="del">[删除]</span></div>
<div class="fr" style="top:1191.98px"><svg class="fi" viewBox="0 0 14 18.500"><path d="M2.300 0.900 H8.600 L13.100 5.400 V16.200 C13.100 17 12.500 17.600 11.700 17.600 H2.300 C1.500 17.600 0.900 17 0.900 16.200 V2.300 C0.900 1.500 1.500 0.900 2.300 0.900 Z" fill="none" stroke="#212529" stroke-width="1.700"/><path d="M8.400 1 V5.600 H13" fill="#212529" stroke="#212529" stroke-width="1"/></svg><span class="nm" style="left:37px">user_register.html</span><span class="del">[删除]</span></div>
<div class="fr g" style="top:1233.72px"><svg class="fi" viewBox="0 0 14 18.500"><path d="M2.300 0.900 H8.600 L13.100 5.400 V16.200 C13.100 17 12.500 17.600 11.700 17.600 H2.300 C1.500 17.600 0.900 17 0.900 16.200 V2.300 C0.900 1.500 1.500 0.900 2.300 0.900 Z" fill="none" stroke="#212529" stroke-width="1.700"/><path d="M8.400 1 V5.600 H13" fill="#212529" stroke="#212529" stroke-width="1"/></svg><span class="nm" style="left:37px">video.html</span><span class="del">[删除]</span></div>
<div class="fr" style="top:1275.46px"><svg class="fi" viewBox="0 0 14 18.500"><path d="M2.300 0.900 H8.600 L13.100 5.400 V16.200 C13.100 17 12.500 17.600 11.700 17.600 H2.300 C1.500 17.600 0.900 17 0.900 16.200 V2.300 C0.900 1.500 1.500 0.900 2.300 0.900 Z" fill="none" stroke="#212529" stroke-width="1.700"/><path d="M8.400 1 V5.600 H13" fill="#212529" stroke="#212529" stroke-width="1"/></svg><span class="nm" style="left:37px">zoom.html</span><span class="del">[删除]</span></div>
</div>
<div class="sbt" style="left:2475px;top:0;width:22px;height:1446px"></div>
<div class="tri-u" style="left:2479.200px;top:14px"></div>
<div class="thumb" style="left:2480px;top:35px;width:12.500px;height:1166px"></div>
<div class="tri-d" style="left:2479.200px;top:1425px"></div>
<div style="position:absolute;left:2497px;top:0;width:10px;height:1446px;background:#fbfbfb"></div>
<div style="position:absolute;left:2497px;top:0;width:10px;height:1338px;background:#c6c6c8;border-radius:0 0 5px 5px"></div>
<div id="side">
<div class="logo"><svg viewBox="0 0 38 44" style="position:absolute;left:34px;top:13px;width:38px;height:44px"><path d="M1.5 18.500 L8 16.500 V30.500 L1.5 28 Z" fill="#96c8c4"/><path d="M10 4 L17 1 V29 L10 26.500 Z" fill="#4db3bd"/><path d="M19.5 8 L27.500 12 V39.500 L19.500 43 Z" fill="#91a9ea"/><path d="M29.500 13.500 L36.500 15.500 V25 L29.500 28.500 Z" fill="#bcd3f0"/></svg><span>独立站管理平台</span></div>
<div class="mi" style="top:95.0px"><svg class="ic" viewBox="0 0 24 24" style="left:38px;top:17.200px;width:21.600px;height:21.600px"><circle cx="12" cy="12" r="11.5" fill="#343a40"/><g fill="#fff"><circle cx="11.300" cy="4.700" r="1.600"/><circle cx="6.300" cy="7.300" r="1.600"/><circle cx="4.400" cy="12.800" r="1.600"/><circle cx="19.600" cy="12.800" r="1.600"/><path d="M15 4.800 L17.700 5.900 L14.300 14.200 A3 3 0 1 1 11.500 13.100 Z"/></g></svg><span class="tx">面板</span></div>
<div class="mi" style="top:157.4px"><svg class="ic" viewBox="0 0 24 24" style="left:38px;top:17.200px;width:21.600px;height:21.600px"><circle cx="12" cy="12" r="11.5" fill="#343a40"/><g fill="#fff"><circle cx="11.300" cy="4.700" r="1.600"/><circle cx="6.300" cy="7.300" r="1.600"/><circle cx="4.400" cy="12.800" r="1.600"/><circle cx="19.600" cy="12.800" r="1.600"/><path d="M15 4.800 L17.700 5.900 L14.300 14.200 A3 3 0 1 1 11.500 13.100 Z"/></g></svg><span class="tx">文章</span><svg class="ch" viewBox="0 0 12 20" style="top:16.500px;width:11px;height:17.500px"><path d="M10 2 L2.500 10 L10 18" fill="none" stroke="#343a40" stroke-width="3"/></svg></div>
<div class="mi" style="top:219.7px"><svg class="ic" viewBox="0 0 24 24" style="left:38px;top:17.200px;width:21.600px;height:21.600px"><circle cx="12" cy="12" r="11.5" fill="#343a40"/><g fill="#fff"><circle cx="11.300" cy="4.700" r="1.600"/><circle cx="6.300" cy="7.300" r="1.600"/><circle cx="4.400" cy="12.800" r="1.600"/><circle cx="19.600" cy="12.800" r="1.600"/><path d="M15 4.800 L17.700 5.900 L14.300 14.200 A3 3 0 1 1 11.500 13.100 Z"/></g></svg><span class="tx">页面</span><svg class="ch" viewBox="0 0 12 20" style="top:16.500px;width:11px;height:17.500px"><path d="M10 2 L2.500 10 L10 18" fill="none" stroke="#343a40" stroke-width="3"/></svg></div>
<div class="mi" style="top:282.1px"><svg class="ic" viewBox="0 0 24 24" style="left:38px;top:17.200px;width:21.600px;height:21.600px"><circle cx="12" cy="12" r="11.5" fill="#343a40"/><g fill="#fff"><circle cx="11.300" cy="4.700" r="1.600"/><circle cx="6.300" cy="7.300" r="1.600"/><circle cx="4.400" cy="12.800" r="1.600"/><circle cx="19.600" cy="12.800" r="1.600"/><path d="M15 4.800 L17.700 5.900 L14.300 14.200 A3 3 0 1 1 11.500 13.100 Z"/></g></svg><span class="tx">商城-品牌</span><svg class="ch" viewBox="0 0 12 20" style="top:16.500px;width:11px;height:17.500px"><path d="M10 2 L2.500 10 L10 18" fill="none" stroke="#343a40" stroke-width="3"/></svg></div>
<div class="mi" style="top:344.4px"><svg class="ic" viewBox="0 0 24 24" style="left:38px;top:17.200px;width:21.600px;height:21.600px"><circle cx="12" cy="12" r="11.5" fill="#343a40"/><g fill="#fff"><circle cx="11.300" cy="4.700" r="1.600"/><circle cx="6.300" cy="7.300" r="1.600"/><circle cx="4.400" cy="12.800" r="1.600"/><circle cx="19.600" cy="12.800" r="1.600"/><path d="M15 4.800 L17.700 5.900 L14.300 14.200 A3 3 0 1 1 11.500 13.100 Z"/></g></svg><span class="tx">商城-广告</span><svg class="ch" viewBox="0 0 12 20" style="top:16.500px;width:11px;height:17.500px"><path d="M10 2 L2.500 10 L10 18" fill="none" stroke="#343a40" stroke-width="3"/></svg></div>
<div class="mi" style="top:406.8px"><svg class="ic" viewBox="0 0 24 24" style="left:38px;top:17.200px;width:21.600px;height:21.600px"><circle cx="12" cy="12" r="11.5" fill="#343a40"/><g fill="#fff"><circle cx="11.300" cy="4.700" r="1.600"/><circle cx="6.300" cy="7.300" r="1.600"/><circle cx="4.400" cy="12.800" r="1.600"/><circle cx="19.600" cy="12.800" r="1.600"/><path d="M15 4.800 L17.700 5.900 L14.300 14.200 A3 3 0 1 1 11.500 13.100 Z"/></g></svg><span class="tx">附件</span><svg class="ch" viewBox="0 0 12 20" style="top:16.500px;width:11px;height:17.500px"><path d="M10 2 L2.500 10 L10 18" fill="none" stroke="#343a40" stroke-width="3"/></svg></div>
<div class="mh">系统管理</div>
<div class="mi" style="top:526px;color:#000"><svg class="ic" viewBox="0 0 24 24"><path d="M19.700 4.600 L4.600 19.700" stroke="#000" stroke-width="5.200" stroke-linecap="round" fill="none"/><path d="M17.600 6.600 L19.900 4.300" stroke="#fff" stroke-width="1.300" stroke-linecap="round" fill="none" opacity=".8"/></svg><span class="tx" style="left:79px;top:1.400px">模板</span><svg class="ch" viewBox="0 0 20 12" style="left:335px;top:19.300px;width:20px;height:12px"><path d="M2 2 L10 9.5 L18 2" fill="none" stroke="#000" stroke-width="2.8"/></svg></div>
<div id="subm">
<div class="si" style="top:18.0px"><i></i><span>所有模板</span></div>
<div class="si" style="top:80.3px"><i></i><span>安装</span></div>
<div class="si" style="top:142.6px"><i></i><span>菜单</span></div>
<div class="si" style="top:204.9px"><i></i><span>板块</span></div>
<div class="si" style="top:267.2px"><i></i><span>设置</span></div>
<div class="si on" style="top:329.5px"><i></i><span>编辑</span></div>
</div>
<div class="mi" style="top:993px"><svg class="ic" viewBox="0 0 24 24" style="left:37px;width:21px"><path d="M6.5 1.5 H9.5 V7.5 H6.5 Z M14.5 1.5 H17.5 V7.5 H14.5 Z M3 8.5 H21 V11 H19.5 V12 C19.5 15.5 17 18 14 18.6 V23 H10 V18.6 C7 18 4.500 15.5 4.500 12 V11 H3 Z" fill="#343a40"/></svg><span class="tx">插件</span><svg class="ch" viewBox="0 0 12 20" style="top:16.500px;width:11px;height:17.500px"><path d="M10 2 L2.500 10 L10 18" fill="none" stroke="#343a40" stroke-width="3"/></svg></div>
<div class="mi" style="top:1055.6px"><svg class="ic" viewBox="0 0 24 24" style="left:38px;top:17.500px;width:21px;height:21px"><path fill="#343a40" fill-rule="evenodd" d="M10 1 H14 L14.6 4.2 L16.6 5.1 L19.4 3.3 L21.9 6.300 L20 8.9 L20.6 11 L23.5 12.2 L22.800 16 L19.600 16.300 L18.300 18.100 L19.100 21.200 L15.600 23 L13.500 20.600 H10.500 L8.400 23 L4.900 21.200 L5.700 18.100 L4.400 16.300 L1.200 16 L0.500 12.200 L3.400 11 L4 8.900 L2.100 6.300 L4.600 3.300 L7.400 5.100 L9.400 4.200 Z M12 8.2 A4 4 0 1 0 12 16.2 A4 4 0 1 0 12 8.2 Z"/></svg><span class="tx">设置</span><svg class="ch" viewBox="0 0 12 20" style="top:16.500px;width:11px;height:17.500px"><path d="M10 2 L2.500 10 L10 18" fill="none" stroke="#343a40" stroke-width="3"/></svg></div>
<div class="mi" style="top:1117px"><svg class="ic" viewBox="0 0 26 24" style="left:37.500px;top:18.500px;width:22px;height:19.500px"><path d="M2 2.500 V21 H25" fill="none" stroke="#343a40" stroke-width="3.2"/><path d="M6.500 15.500 L11.500 10 L15.500 13.500 L22 7.500" fill="none" stroke="#343a40" stroke-width="2.800"/></svg><span class="tx">统计</span><svg class="ch" viewBox="0 0 12 20" style="top:16.500px;width:11px;height:17.500px"><path d="M10 2 L2.500 10 L10 18" fill="none" stroke="#343a40" stroke-width="3"/></svg></div>
</div>
</div>
<div id="winCorner" style="position:absolute;left:0;top:0;width:2868px;height:1566px;border-radius:10px;box-shadow:0 0 0 14px #ededed;pointer-events:none;z-index:99"></div>
</body>
</html>
